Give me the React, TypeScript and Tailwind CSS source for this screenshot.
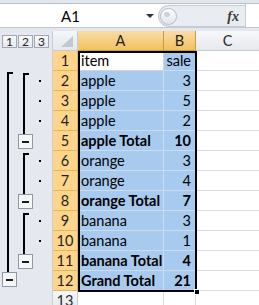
const rows: { item: string; sale: number | string; bold?: boolean }[] = [
  { item: "item", sale: "sale" },
  { item: "apple", sale: 3 },
  { item: "apple", sale: 5 },
  { item: "apple", sale: 2 },
  { item: "apple Total", sale: 10, bold: true },
  { item: "orange", sale: 3 },
  { item: "orange", sale: 4 },
  { item: "orange Total", sale: 7, bold: true },
  { item: "banana", sale: 3 },
  { item: "banana", sale: 1 },
  { item: "banana Total", sale: 4, bold: true },
  { item: "Grand Total", sale: 21, bold: true },
];

const detailRows = [2, 3, 4, 6, 7, 9, 10];

const MinusBox = ({ x, y }: { x: number; y: number }) => (
  <g>
    <rect x={x + 0.5} y={y + 0.5} width={14} height={14} fill="#f4f6f8" stroke="#8e99a6" />
    <rect x={x + 4} y={y + 7} width={7} height={2} fill="#1b1b1b" />
  </g>
);

const Outline = () => {
  const top = (r: number) => (r - 1) * 20;
  return (
    <svg width="53" height="254" className="block">
      {/* level 1 bracket */}
      <rect x={7} y={21} width={6} height={2} fill="#000" />
      <rect x={7} y={21} width={2} height={top(12) + 2 - 21} fill="#000" />
      <MinusBox x={2} y={top(12) + 1} />
      {/* level 2 brackets */}
      {[
        [2, 5],
        [6, 8],
        [9, 11],
      ].map(([s, e]) => (
        <g key={s}>
          <rect x={23} y={top(s) + 2} width={6} height={2} fill="#000" />
          <rect x={23} y={top(s) + 2} width={2} height={top(e) + 3 - top(s) - 2} fill="#000" />
          <MinusBox x={18} y={top(e) + 3} />
        </g>
      ))}
      {detailRows.map((r) => (
        <rect key={r} x={39} y={top(r) + 9} width={2} height={2} fill="#000" />
      ))}
    </svg>
  );
};

const LevelButton = ({ n }: { n: number }) => (
  <div className="w-[15px] h-[13px] border border-[#9ea8b3] bg-gradient-to-b from-[#f8f9fb] to-[#e6e9ee] text-[12px] leading-[11px] text-center text-[#222]">
    {n}
  </div>
);

export default function App() {
  return (
    <div
      className="w-[259px] h-[305px] overflow-hidden bg-white text-black"
      style={{ fontFamily: "Lato, 'Liberation Sans', sans-serif" }}
    >
      <div className="h-[4px] bg-[#e2e7ed] border-b border-[#b7bfc9]" />
      <div className="h-[24px] flex border-b border-[#c3c9d1] bg-white">
        <div className="w-[141px] flex items-center justify-center text-[15px] pt-[1px]">A1</div>
        <div className="w-[17px] flex items-center justify-center">
          <div className="w-0 h-0 border-l-[4px] border-r-[4px] border-t-[4px] border-l-transparent border-r-transparent border-t-[#333]" />
        </div>
        <div className="w-[87px] mt-[1px] flex items-center bg-[#e9ecf0] border border-r-0 border-[#c6ccd3] rounded-l-full">
          <div className="ml-[1px] w-[17px] h-[17px] rounded-full border border-[#b3bcc6] bg-gradient-to-b from-[#ffffff] to-[#dfe3e9] flex items-start justify-start">
            <div className="mt-[3px] ml-[3px] w-[6px] h-[5px] rounded-full bg-[#cdd3da]" />
          </div>
          <div className="flex-1" />
          <span
            className="mr-[6px] text-[14px] italic font-bold text-[#3a3a3a]"
            style={{ fontFamily: "'Liberation Serif', serif" }}
          >
            fx
          </span>
        </div>
        <div className="flex-1 border-l border-[#c6ccd3] bg-white" />
      </div>
      <div className="h-[3px] bg-[#e4e8ee]" />
      <div className="flex">
        <div className="w-[53px] bg-[#e5e9ef] border-r border-[#c9cfd7]">
          <div className="h-[20px] flex items-center gap-[1px] pl-[2px]">
            <LevelButton n={1} />
            <LevelButton n={2} />
            <LevelButton n={3} />
          </div>
          <Outline />
        </div>
        <div className="flex-1 text-[14.5px]">
          {/* header row */}
          <div className="flex h-[20px]">
            <div className="w-[25px] relative border-r border-b border-[#c7ccd4] bg-gradient-to-b from-[#f4f6f8] to-[#e4e8ed]">
              <div className="absolute right-[4px] bottom-[3px] w-0 h-0 border-b-[11px] border-l-[12px] border-l-transparent border-b-[#c2c8d0]" />
            </div>
            <div className="w-[86px] flex items-center justify-center border-r border-b border-[#c79b45] bg-gradient-to-b from-[#f9dca4] to-[#f1c15f] text-[#1f1f1f]">
              A
            </div>
            <div className="w-[32px] flex items-center justify-center border-r border-b border-[#c79b45] bg-gradient-to-b from-[#f9dca4] to-[#f1c15f] text-[#1f1f1f]">
              B
            </div>
            <div className="flex-1 flex items-center justify-center border-b border-[#c7ccd4] bg-gradient-to-b from-[#f7f8fa] to-[#e5e8ed] text-[#2a2a2a]">
              C
            </div>
          </div>
          <div className="relative">
            {rows.map((r, i) => (
              <div key={i} className="flex h-[20px]">
                <div className="w-[25px] flex items-center justify-center border-r border-b border-[#e0b660] bg-[#fed58b] text-[#1f1f1f]">
                  {i + 1}
                </div>
                <div
                  className={`w-[86px] pl-[3px] leading-[19px] whitespace-nowrap overflow-hidden border-r border-b ${
                    i === 0 ? "bg-white border-[#d4d4d4]" : "bg-[#a7caee] border-[#cbdcee]"
                  } ${r.bold ? "font-bold" : ""}`}
                >
                  {r.item}
                </div>
                <div
                  className={`w-[32px] pr-[4px] text-right leading-[19px] border-r border-b bg-[#a7caee] border-[#cbdcee] ${
                    r.bold ? "font-bold" : ""
                  }`}
                >
                  {r.sale}
                </div>
                <div className="flex-1 border-b border-[#dadcdf]" />
              </div>
            ))}
            <div className="flex h-[20px]">
              <div className="w-[25px] flex items-center justify-center border-r border-[#c7ccd4] bg-gradient-to-b from-[#f4f6f8] to-[#e4e8ed] text-[#2a2a2a]">
                13
              </div>
              <div className="w-[86px] border-r border-[#dadcdf]" />
              <div className="w-[32px] border-r border-[#dadcdf]" />
              <div className="flex-1" />
            </div>
            <div className="absolute left-[25px] top-[0px] w-[119px] h-[241px] border-2 border-black pointer-events-none" />
            <div className="absolute left-[141px] top-[238px] w-[6px] h-[6px] bg-black border border-white" />
          </div>
        </div>
      </div>
    </div>
  );
}
